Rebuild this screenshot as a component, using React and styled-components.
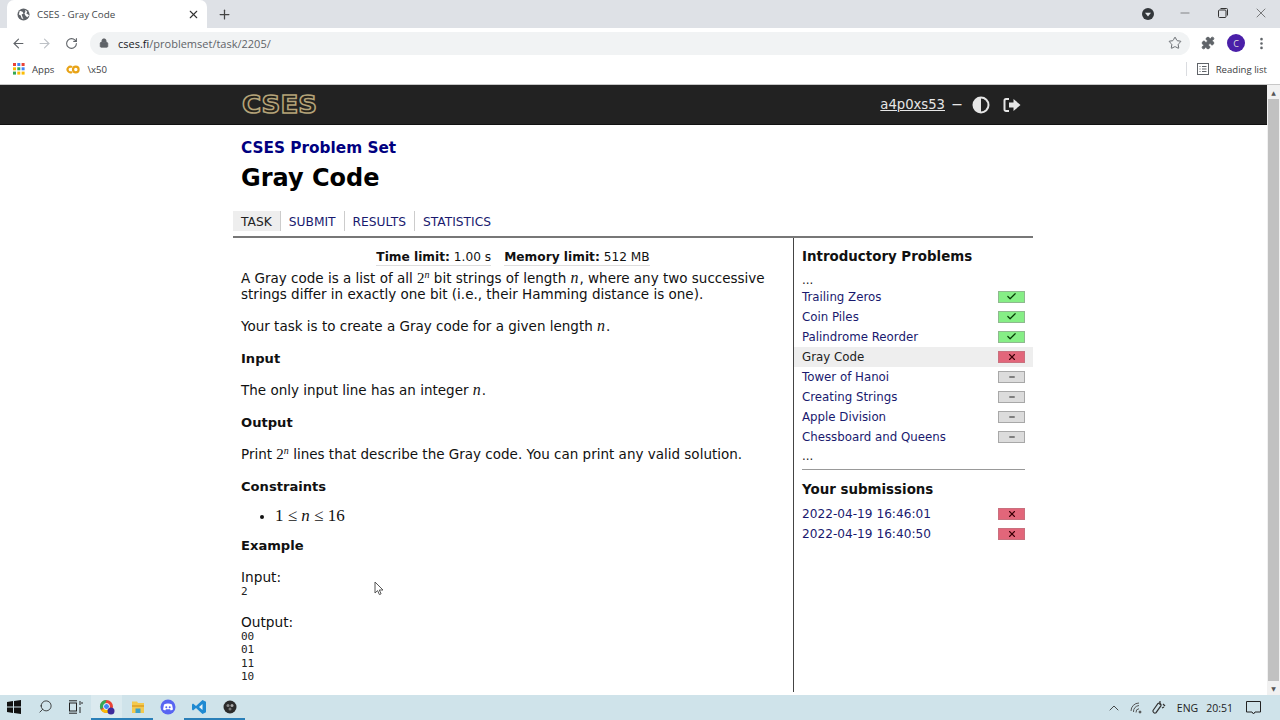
import styled, { createGlobalStyle } from 'styled-components';
import {
  ArrowLeft,
  ArrowRight,
  RotateCw,
  Lock,
  Star,
  Puzzle,
  EllipsisVertical,
  Plus,
  X,
  Minus,
  Check,
  ChevronUp,
  Search,
} from 'lucide-react';

const GlobalStyle = createGlobalStyle`
  html, body {
    margin: 0;
    padding: 0;
    height: 720px;
    overflow: hidden;
    background: #fff;
  }
  * {
    box-sizing: border-box;
  }
`;

const problems = [
  { name: 'Trailing Zeros', status: 'ok' },
  { name: 'Coin Piles', status: 'ok' },
  { name: 'Palindrome Reorder', status: 'ok' },
  { name: 'Gray Code', status: 'bad', current: true },
  { name: 'Tower of Hanoi', status: 'none' },
  { name: 'Creating Strings', status: 'none' },
  { name: 'Apple Division', status: 'none' },
  { name: 'Chessboard and Queens', status: 'none' },
];

const submissions = ['2022-04-19 16:46:01', '2022-04-19 16:40:50'];

const N = () => <MathVar>n</MathVar>;

const StatusBadge = ({ status }) => (
  <Badge $status={status}>
    {status === 'ok' && <Check size={11} strokeWidth={2.6} />}
    {status === 'bad' && <X size={10} strokeWidth={2.6} />}
    {status === 'none' && <Minus size={8} strokeWidth={3} />}
  </Badge>
);

const App = () => {
  return (
    <Screen>
      <GlobalStyle />
      <TabStrip>
        <Tab>
          <svg width="13" height="13" viewBox="0 0 14 14">
            <circle cx="7" cy="7" r="6.5" fill="#5f6368" />
            <path d="M3 3l3 1 1 2-2 1 1 3 1 2-2-1-1-3-2-1zM9 2l2 2-1 2 2 1 1 1-2 2-2-2-1-2 1-2z" fill="#fff" />
          </svg>
          <TabTitle>CSES - Gray Code</TabTitle>
          <X size={13} strokeWidth={2} color="#333" />
        </Tab>
        <NewTab>
          <Plus size={15} strokeWidth={2} color="#444" />
        </NewTab>
        <TabFill />
        <ProfileDot>
          <svg width="12" height="12" viewBox="0 0 12 12">
            <circle cx="6" cy="6" r="6" fill="#33373b" />
            <path d="M3 4.7h6L6 8.6z" fill="#e4e7ea" />
          </svg>
        </ProfileDot>
        <WindowButton>
          <Minus size={14} strokeWidth={1} color="#444" />
        </WindowButton>
        <WindowButton>
          <svg width="10" height="10" viewBox="0 0 10 10" fill="none" stroke="#333" strokeWidth="1">
            <rect x="0.5" y="2" width="7.5" height="7.5" rx="1" />
            <path d="M2.5 .5h6a1 1 0 0 1 1 1v6" />
          </svg>
        </WindowButton>
        <WindowButton>
          <X size={16} strokeWidth={1} color="#444" />
        </WindowButton>
      </TabStrip>

      <Toolbar>
        <ArrowLeft size={15} strokeWidth={1.8} color="#5f6368" />
        <ForwardIcon>
          <ArrowRight size={15} strokeWidth={1.8} color="#bdc1c6" />
        </ForwardIcon>
        <RotateCw size={13} strokeWidth={2} color="#5f6368" />
        <Omnibox>
          <Lock size={10} fill="#5f6368" color="#5f6368" strokeWidth={2} />
          <Url>
            cses.fi<UrlPath>/problemset/task/2205/</UrlPath>
          </Url>
          <OmniboxFill />
          <Star size={14} strokeWidth={1.6} color="#5f6368" />
        </Omnibox>
        <Puzzle size={14} fill="#5f6368" color="#5f6368" strokeWidth={1.5} />
        <Avatar>C</Avatar>
        <MenuDots>
          <EllipsisVertical size={15} strokeWidth={2.2} color="#5f6368" />
        </MenuDots>
      </Toolbar>

      <Bookmarks>
        <BookmarkItem>
          <svg width="12" height="12" viewBox="0 0 12 12">
            {[0, 1, 2].map((row) =>
              [0, 1, 2].map((col) => (
                <rect
                  key={`${row}-${col}`}
                  x={col * 4.3}
                  y={row * 4.3}
                  width="3"
                  height="3"
                  fill={['#ea4335', '#4285f4', '#ea4335', '#fbbc04', '#34a853', '#4285f4', '#34a853', '#fbbc04', '#fbbc04'][row * 3 + col]}
                />
              ))
            )}
          </svg>
          <span>Apps</span>
        </BookmarkItem>
        <BookmarkItem>
          <svg width="14" height="9" viewBox="0 0 14 9" fill="none" strokeWidth="2.2">
            <path d="M6 2.2a2.8 2.8 0 1 0 0 4.6" stroke="#e8a317" />
            <circle cx="9.8" cy="4.5" r="2.8" stroke="#e8a317" />
          </svg>
          <span>\x50</span>
        </BookmarkItem>
        <BookmarksFill />
        <ReadingDivider />
        <ReadingList>
          <svg width="12" height="12" viewBox="0 0 12 12" fill="none" stroke="#5f6368" strokeWidth="1">
            <rect x="0.5" y="0.5" width="11" height="11" />
            <path d="M2.5 3.5h1M2.5 6h1M2.5 8.5h1M5 3.5h4.5M5 6h4.5M5 8.5h4.500" />
          </svg>
          <span>Reading list</span>
        </ReadingList>
      </Bookmarks>

      <Viewport>
        <PageArea>
          <SiteHeader>
            <HeaderInner>
              <LogoSvg width="78" height="26" viewBox="0 0 78 26">
                <LogoText x="1" y="21" textLength="75" lengthAdjust="spacingAndGlyphs">
                  CSES
                </LogoText>
              </LogoSvg>
              <HeaderControls>
                <UserLink>a4p0xs53</UserLink>
                <Dash>—</Dash>
                <ThemeIcon width="18" height="18" viewBox="0 0 18 18">
                  <circle cx="9" cy="9" r="8.5" fill="#e6e6e6" />
                  <path d="M9 2.5a6.500 6.500 0 0 1 0 13z" fill="#222" />
                </ThemeIcon>
                <LogoutIcon width="18" height="16" viewBox="0 0 18 16">
                  <path d="M6 2H3a1.500 1.500 0 0 0-1.500 1.500v9A1.500 1.500 0 0 0 3 14h3" fill="none" stroke="#e6e6e6" strokeWidth="2" />
                  <path d="M6 5.500h4.500V2l7 6-7 6v-3.500H6z" fill="#e6e6e6" />
                </LogoutIcon>
              </HeaderControls>
            </HeaderInner>
          </SiteHeader>

          <Container>
            <TitleBlock>
              <SetTitle>CSES Problem Set</SetTitle>
              <TaskTitle>Gray Code</TaskTitle>
            </TitleBlock>
            <Nav>
              <NavItem $active>TASK</NavItem>
              <NavItem>SUBMIT</NavItem>
              <NavItem>RESULTS</NavItem>
              <NavItem $last>STATISTICS</NavItem>
            </Nav>

            <Columns>
              <Content>
                <Limits>
                  <Limit>
                    <b>Time limit:</b> 1.00 s
                  </Limit>
                  <Limit>
                    <b>Memory limit:</b> 512 MB
                  </Limit>
                </Limits>
                <Paragraph>
                  A Gray code is a list of all <MathNum>2</MathNum>
                  <MathSup>n</MathSup> bit strings of length <N />, where any two successive strings differ in exactly
                  one bit (i.e., their Hamming distance is one).
                </Paragraph>
                <Paragraph>
                  Your task is to create a Gray code for a given length <N />.
                </Paragraph>
                <Heading>Input</Heading>
                <Paragraph>
                  The only input line has an integer <N />.
                </Paragraph>
                <Heading>Output</Heading>
                <Paragraph>
                  Print <MathNum>2</MathNum>
                  <MathSup>n</MathSup> lines that describe the Gray code. You can print any valid solution.
                </Paragraph>
                <Heading>Constraints</Heading>
                <Bullets>
                  <li>
                    <Formula>
                      1 ≤ <i>n</i> ≤ 16
                    </Formula>
                  </li>
                </Bullets>
                <Heading>Example</Heading>
                <ExampleLabel>Input:</ExampleLabel>
                <Pre>2</Pre>
                <ExampleLabel>Output:</ExampleLabel>
                <Pre>{'00\n01\n11\n10'}</Pre>
              </Content>

              <Sidebar>
                <SideTitle>Introductory Problems</SideTitle>
                <Ellipsis>...</Ellipsis>
                {problems.map((p) => (
                  <SideRow key={p.name} $current={p.current}>
                    <SideLink $current={p.current}>{p.name}</SideLink>
                    <StatusBadge status={p.status} />
                  </SideRow>
                ))}
                <Ellipsis $tail>...</Ellipsis>
                <SideRule />
                <SideTitle>Your submissions</SideTitle>
                <SubmissionList>
                  {submissions.map((s) => (
                    <SideRow key={s}>
                      <SideLink>{s}</SideLink>
                      <StatusBadge status="bad" />
                    </SideRow>
                  ))}
                </SubmissionList>
              </Sidebar>
            </Columns>
          </Container>

          <Pointer width="10" height="15" viewBox="0 0 10 15">
            <path d="M1 1v11l2.600-2.400 1.800 4 1.700-.8-1.800-3.800H9z" fill="#fff" stroke="#555" strokeWidth="1" />
          </Pointer>
        </PageArea>

        <Scrollbar>
          <ScrollArrow>▲</ScrollArrow>
          <ScrollThumb />
          <ScrollArrow>▼</ScrollArrow>
        </Scrollbar>
      </Viewport>

      <Taskbar>
        <TaskIcon>
          <svg width="14" height="14" viewBox="0 0 14 14" fill="#111">
            <path d="M0 2l6-.9V6.600H0zM7 1l7-1v6.600H7zM0 7.400h6v5.500l-6-.9zM7 7.400h7V14l-7-1z" />
          </svg>
        </TaskIcon>
        <TaskIcon>
          <FlippedSearch size={15} strokeWidth={1.3} color="#222" />
        </TaskIcon>
        <TaskIcon>
          <svg width="15" height="14" viewBox="0 0 15 14" fill="none" stroke="#222" strokeWidth="1">
            <rect x="1.500" y="3" width="7" height="8" />
            <path d="M1 .8h8M1 13.200h8M12 1v4M12 7v6M14 2v2" />
          </svg>
        </TaskIcon>
        <TaskIcon $open $active>
          <svg width="16" height="16" viewBox="0 0 16 16">
            <circle cx="7.500" cy="7.500" r="6.500" fill="#ea4335" />
            <path d="M7.500 1a6.500 6.500 0 0 0-5.600 9.800L5 7.500z" fill="#34a853" />
            <path d="M2 11a6.500 6.500 0 0 0 11 0l-3-3z" fill="#fbbc04" />
            <circle cx="7.500" cy="7.500" r="3" fill="#4285f4" stroke="#fff" strokeWidth="1" />
            <circle cx="12" cy="12" r="3.500" fill="#3d2a9c" />
          </svg>
        </TaskIcon>
        <TaskIcon $open>
          <svg width="14" height="14" viewBox="0 0 14 14">
            <path d="M1 1.500h5l1 1.500h6v10H1z" fill="#f3c94e" />
            <path d="M1 5h12v2H1z" fill="#e3a92d" />
            <path d="M4.500 8.500h5V13h-5z" fill="#3aa0c8" />
          </svg>
        </TaskIcon>
        <TaskIcon>
          <svg width="16" height="16" viewBox="0 0 16 16">
            <circle cx="8" cy="8" r="7.500" fill="#5865f2" />
            <path d="M4 5.500c2.500-1.200 5.500-1.200 8 0l1 5-2.200 1-.8-1.200H6l-.8 1.200-2.200-1z" fill="#fff" />
            <circle cx="6.300" cy="8.200" r="1" fill="#5865f2" />
            <circle cx="9.700" cy="8.200" r="1" fill="#5865f2" />
          </svg>
        </TaskIcon>
        <TaskIcon $open>
          <svg width="16" height="16" viewBox="0 0 16 16">
            <path d="M11.500 1L15 2.700v10.600L11.500 15 5 9l-3 2.400-1-.8V5.400l1-.8L5 7z" fill="#1f8ad2" />
            <path d="M11.500 5L8 8l3.500 3z" fill="#e6f2f7" />
          </svg>
        </TaskIcon>
        <TaskIcon $open>
          <svg width="14" height="14" viewBox="0 0 14 14">
            <circle cx="7" cy="7" r="6.500" fill="#2b2b2b" />
            <circle cx="5" cy="5.500" r="1.500" fill="#888" />
            <circle cx="9" cy="5.500" r="1.500" fill="#aaa" />
            <circle cx="7" cy="9" r="1.500" fill="#777" />
          </svg>
        </TaskIcon>
        <TaskFill />
        <Tray>
          <ChevronUp size={16} strokeWidth={1.2} color="#222" />
          <svg width="13" height="12" viewBox="0 0 13 12" fill="none" stroke="#555" strokeWidth="1">
            <path d="M1 9a8 8 0 0 1 8-8M3.500 10a6 6 0 0 1 5.500-6.500M6 10.500a3.500 3.500 0 0 1 3-3.800" />
            <circle cx="10" cy="10" r="1" fill="#555" />
          </svg>
          <svg width="15" height="15" viewBox="0 0 15 15" fill="none" stroke="#333" strokeWidth="1.200">
            <path d="M2 10.500l5-7a2 2 0 0 1 3 2.200l-5 7a2 2 0 0 1-3-2.200zM9 1v4M12 4l2 2M11 8l2-1" />
          </svg>
          <TrayText $lang>ENG</TrayText>
          <TrayText>20:51</TrayText>
          <NotifyIcon width="15" height="14" viewBox="0 0 15 14" fill="none" stroke="#222" strokeWidth="1">
            <path d="M.5 .5h14v10.500H9l-1.500 2-1.500-2H.5z" />
          </NotifyIcon>
        </Tray>
        <ShowDesktop />
      </Taskbar>
    </Screen>
  );
};

export default App;

const Screen = styled.div`
  width: 1280px;
  height: 720px;
  display: flex;
  flex-direction: column;
  overflow: hidden;
  font-family: 'DejaVu Sans', Verdana, sans-serif;
`;

const TabStrip = styled.div`
  height: 28px;
  flex: none;
  display: flex;
  align-items: flex-end;
  padding-left: 7px;
  background: #dee1e6;
`;

const Tab = styled.div`
  width: 200px;
  height: 28px;
  display: flex;
  align-items: center;
  gap: 7px;
  padding: 0 7px 0 10px;
  background: #fff;
  border-radius: 7px 7px 0 0;
`;

const TabTitle = styled.span`
  flex: 1;
  font: 9.800px 'Open Sans', sans-serif;
  color: #45484c;
`;

const NewTab = styled.div`
  width: 34px;
  height: 28px;
  display: flex;
  align-items: center;
  justify-content: center;
`;

const TabFill = styled.div`
  flex: 1;
`;

const ProfileDot = styled.div`
  width: 24px;
  height: 28px;
  display: flex;
  align-items: center;
`;

const WindowButton = styled.div`
  width: 38px;
  height: 28px;
  display: flex;
  align-items: center;
  justify-content: center;
  padding-bottom: 3px;
`;

const Toolbar = styled.div`
  height: 28px;
  flex: none;
  display: flex;
  align-items: center;
  padding: 2px 0 0 11px;
  gap: 11px;
  background: #fff;
`;

const ForwardIcon = styled.span`
  display: flex;
  margin-right: 2px;
`;

const Omnibox = styled.div`
  width: 1100px;
  height: 23px;
  margin-left: 1px;
  display: flex;
  align-items: center;
  gap: 9px;
  padding: 0 8px 0 9px;
  border-radius: 12px;
  background: #f1f3f4;
`;

const Url = styled.span`
  font: 11px 'Open Sans', sans-serif;
  color: #202124;
`;

const UrlPath = styled.span`
  color: #5f6368;
`;

const OmniboxFill = styled.div`
  flex: 1;
`;

const Avatar = styled.div`
  width: 18px;
  height: 18px;
  margin-left: 1px;
  display: flex;
  align-items: center;
  justify-content: center;
  border-radius: 50%;
  background: #4a1fa8;
  color: #ddd;
  font: 9px 'Open Sans', sans-serif;
`;

const MenuDots = styled.span`
  display: flex;
  margin-left: -2px;
`;

const Bookmarks = styled.div`
  height: 29px;
  flex: none;
  display: flex;
  align-items: center;
  padding: 0 0 2px 13px;
  gap: 12px;
  background: #fff;
  border-bottom: 1px solid #c8c8c8;
`;

const BookmarkItem = styled.div`
  display: flex;
  align-items: center;
  gap: 7px;
  font: 9.600px 'Open Sans', sans-serif;
  color: #3c4043;
`;

const BookmarksFill = styled.div`
  flex: 1;
`;

const ReadingDivider = styled.div`
  width: 1px;
  height: 14px;
  background: #dadce0;
`;

const ReadingList = styled(BookmarkItem)`
  margin-left: -2px;
  padding-right: 13px;
`;

const Viewport = styled.div`
  flex: 1;
  min-height: 0;
  display: flex;
`;

const PageArea = styled.div`
  position: relative;
  flex: 1;
  min-width: 0;
  overflow: hidden;
`;

const SiteHeader = styled.header`
  height: 40px;
  background: #222;
  border-bottom: 1px solid #111;
`;

const HeaderInner = styled.div`
  width: 800px;
  height: 39px;
  margin-left: 233px;
  padding: 0 12px 0 8px;
  display: flex;
  align-items: center;
  justify-content: space-between;
`;

const LogoSvg = styled.svg`
  overflow: visible;
`;

const LogoText = styled.text`
  font: bold 25px 'DejaVu Sans', sans-serif;
  fill: #26231b;
  stroke: #b5a47a;
  stroke-width: 1.500;
`;

const HeaderControls = styled.div`
  display: flex;
  align-items: center;
  color: #e6e6e6;
  font-size: 13.200px;
`;

const UserLink = styled.a`
  color: #e6e6e6;
  text-decoration: underline;
`;

const Dash = styled.span`
  margin-left: 7px;
  font-size: 10px;
  font-weight: bold;
`;

const ThemeIcon = styled.svg`
  margin-left: 10px;
`;

const LogoutIcon = styled.svg`
  margin-left: 13px;
`;

const Container = styled.main`
  width: 800px;
  margin-left: 233px;
`;

const TitleBlock = styled.div`
  padding: 14px 8px 0;
`;

const SetTitle = styled.div`
  font-size: 15.300px;
  line-height: 19px;
  font-weight: bold;
  color: #000080;
`;

const TaskTitle = styled.h1`
  margin: 3px 0 0;
  font-size: 24px;
  line-height: 34px;
  font-weight: bold;
  color: #000;
`;

const Nav = styled.nav`
  margin-top: 16px;
  height: 27px;
  display: flex;
  align-items: flex-start;
  border-bottom: 2px solid #777;
`;

const NavItem = styled.a`
  height: 20px;
  padding: 2px 8px 0;
  display: flex;
  align-items: center;
  font-size: 12.250px;
  color: ${({ $active }) => ($active ? '#222' : '#19196e')};
  background: ${({ $active }) => ($active ? '#eee' : 'transparent')};
  border-right: ${({ $last }) => ($last ? 'none' : '1px solid #ccc')};
`;

const Columns = styled.div`
  display: flex;
  height: 454px;
`;

const Content = styled.article`
  width: 561px;
  flex: none;
  padding: 11px 8px 0;
  border-right: 1px solid #444;
  font-size: 13.500px;
  line-height: 16px;
  color: #111;
`;

const Limits = styled.div`
  display: flex;
  justify-content: center;
  gap: 13px;
  font-size: 12.200px;
  margin-bottom: 4px;
`;

const Limit = styled.span`
  border-bottom: 1px solid #ddd;
`;

const Paragraph = styled.p`
  margin: 0 0 16px;
`;

const MathVar = styled.i`
  font-family: 'Liberation Serif', serif;
  font-size: 16px;
  letter-spacing: 1px;
`;

const MathNum = styled.span`
  font-family: 'Liberation Serif', serif;
  font-size: 15px;
`;

const MathSup = styled.sup`
  font-family: 'Liberation Serif', serif;
  font-style: italic;
  font-size: 10px;
  line-height: 0;
`;

const Heading = styled.h2`
  margin: 0 0 15px;
  font-size: 13.100px;
  line-height: 17px;
  font-weight: bold;
  color: #111;
`;

const Bullets = styled.ul`
  margin: -4px 0 11px;
  padding-left: 34px;
  line-height: 20px;
`;

const Formula = styled.span`
  font-family: 'Liberation Serif', serif;
  font-size: 17px;
`;

const ExampleLabel = styled.div`
  line-height: 16px;
  font-size: 13.700px;
`;

const Pre = styled.pre`
  margin: 0 0 15px;
  font-family: 'DejaVu Sans Mono', monospace;
  font-size: 11px;
  line-height: 13.600px;
  color: #222;
`;

const Sidebar = styled.aside`
  width: 239px;
  flex: none;
  padding-top: 10px;
  font-size: 11.800px;
`;

const SideTitle = styled.h3`
  margin: 0 8px;
  font-size: 13.400px;
  line-height: 18px;
  font-weight: bold;
  color: #111;
`;

const Ellipsis = styled.div`
  padding: ${({ $tail }) => ($tail ? '3px' : '8px')} 8px 0;
  line-height: 13px;
  color: #222;
`;

const SideRow = styled.div`
  height: 20px;
  padding: 0 8px;
  display: flex;
  align-items: center;
  justify-content: space-between;
  background: ${({ $current }) => ($current ? '#eee' : 'transparent')};
`;

const SideLink = styled.a`
  color: ${({ $current }) => ($current ? '#222' : '#19196e')};
`;

const badgeColors = {
  ok: { bg: '#86ee86', border: '#8fb98f', fg: '#063c06' },
  bad: { bg: '#e2667a', border: '#c9707e', fg: '#3d0008' },
  none: { bg: '#dcdcdc', border: '#a8a8a8', fg: '#222' },
};

const Badge = styled.span`
  width: 27px;
  height: 12px;
  margin-top: -1px;
  display: flex;
  align-items: center;
  justify-content: center;
  background: ${({ $status }) => badgeColors[$status].bg};
  border: 1px solid ${({ $status }) => badgeColors[$status].border};
  color: ${({ $status }) => badgeColors[$status].fg};
`;

const SideRule = styled.hr`
  margin: 6px 8px 11px;
  border: none;
  border-top: 1px solid #999;
`;

const SubmissionList = styled.div`
  margin-top: 5px;
  font-size: 12.150px;
`;

const Pointer = styled.svg`
  position: absolute;
  left: 374px;
  top: 496px;
`;

const Scrollbar = styled.div`
  width: 13px;
  flex: none;
  display: flex;
  flex-direction: column;
  background: #f1f1f1;
`;

const ScrollArrow = styled.div`
  height: 14px;
  flex: none;
  display: flex;
  align-items: center;
  justify-content: center;
  font-size: 6px;
  color: #555;
`;

const ScrollThumb = styled.div`
  flex: 1;
  margin: 0 1px;
  background: #c1c1c1;
`;

const Taskbar = styled.footer`
  height: 25px;
  flex: none;
  display: flex;
  align-items: center;
  background: #cfe3ea;
`;

const TaskIcon = styled.div`
  width: 30.800px;
  height: 25px;
  display: flex;
  align-items: center;
  justify-content: center;
  background: ${({ $active }) => ($active ? '#dbeaef' : 'transparent')};
  border-bottom: 2px solid ${({ $open }) => ($open ? '#2a7fb8' : 'transparent')};
  &:first-child {
    margin-left: -1px;
  }
`;

const FlippedSearch = styled(Search)`
  transform: scaleX(-1);
`;

const TaskFill = styled.div`
  flex: 1;
`;

const Tray = styled.div`
  display: flex;
  align-items: center;
  gap: 8px;
`;

const TrayText = styled.span`
  font: 10.500px 'Open Sans', sans-serif;
  color: #222;
  margin-left: ${({ $lang }) => ($lang ? '3px' : '0')};
`;

const NotifyIcon = styled.svg`
  margin-left: 5px;
`;

const ShowDesktop = styled.div`
  width: 19px;
`;
